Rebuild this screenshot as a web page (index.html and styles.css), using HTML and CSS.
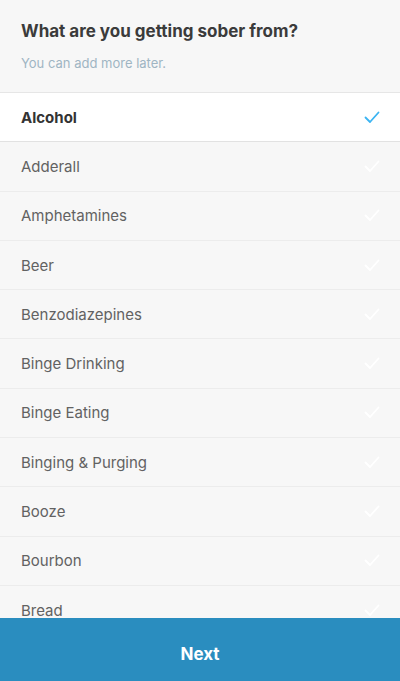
FILE: index.html
```html
<!DOCTYPE html>
<html lang="en">
<head>
    <meta charset="UTF-8">
    <meta name="viewport" content="width=device-width, initial-scale=1.0">
    <title>Getting sober from</title>
    <link rel="stylesheet" href="styles.css">
</head>
<body>

    <div class="screen">
        <header class="intro">
            <h1>What are you getting sober from?</h1>
            <p>You can add more later.</p>
        </header>

        <ul class="choices" id="choices">
            <!-- Rows are inserted here -->
        </ul>

        <button class="next-button">Next</button>
    </div>

    <script>
        // Things the user can pick from
        const items = [
            'Alcohol', 'Adderall', 'Amphetamines', 'Beer', 'Benzodiazepines',
            'Binge Drinking', 'Binge Eating', 'Binging & Purging', 'Booze',
            'Bourbon', 'Bread'
        ];

        let selected = ['Alcohol'];

        const check = '<svg class="check" width="16" height="13" viewBox="0 0 16 13"><path d="M1.5 6.5 L6 11 L14.5 1.5" fill="none" stroke="currentColor" stroke-width="1.8" stroke-linecap="round" stroke-linejoin="round"/></svg>';

        function renderList() {
            const list = document.getElementById('choices');
            list.innerHTML = '';
            items.forEach(name => {
                const li = document.createElement('li');
                li.classList.add('choice');
                if (selected.includes(name)) li.classList.add('selected');
                li.innerHTML = `<span>${name.replace('&', '&amp;')}</span>${check}`;
                li.addEventListener('click', () => {
                    if (selected.includes(name)) {
                        selected = selected.filter(n => n !== name);
                    } else {
                        selected.push(name);
                    }
                    renderList();
                });
                list.appendChild(li);
            });
        }

        renderList();
    </script>
</body>
</html>
```

FILE: styles.css
```css
/* Basic Reset */
* {
    margin: 0;
    padding: 0;
    box-sizing: border-box;
}
body {
    font-family: Inter, "Noto Sans", sans-serif;
    background-color: #f7f7f7;
    color: #333;
}

.screen {
    display: flex;
    flex-direction: column;
    height: 100vh;
}

/* Header */
.intro {
    height: 93px;
    padding: 20px 21px 0;
    border-bottom: 1px solid #e6e6e6;
    flex-shrink: 0;
}
.intro h1 {
    font-size: 17px;
    font-weight: 700;
    color: #3b3b3b;
    line-height: 22px;
}
.intro p {
    margin-top: 12px;
    font-size: 13px;
    color: #9fb5c3;
    line-height: 18px;
}

/* List */
.choices {
    list-style: none;
    flex: 1;
    overflow: hidden;
}
.choice {
    display: flex;
    align-items: center;
    justify-content: space-between;
    height: 49.3px;
    padding: 0 20px 0 21px;
    border-bottom: 1px solid #ececec;
    font-size: 15px;
    color: #626262;
    cursor: pointer;
}
.choice .check {
    color: #ffffff;
}
.choice.selected {
    background-color: #fff;
    border-bottom: 1px solid #e2e2e2;
    font-weight: 700;
    color: #333;
}
.choice.selected .check {
    color: #3bb4f2;
}

/* Button */
.next-button {
    flex-shrink: 0;
    height: 63px;
    width: 100%;
    padding-top: 9px;
    border: none;
    background-color: #2a8dbf;
    color: #fff;
    font-family: inherit;
    font-size: 17px;
    font-weight: 700;
    cursor: pointer;
}
```
